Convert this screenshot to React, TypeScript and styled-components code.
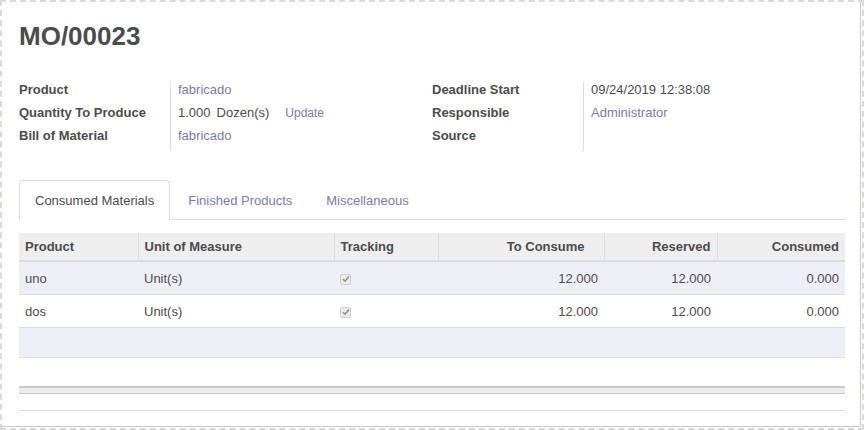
import React from "react";
import styled, { createGlobalStyle } from "styled-components";

const GlobalStyle = createGlobalStyle`
  html, body {
    margin: 0;
    padding: 0;
    background: #fff;
  }
  body {
    font-family: "Liberation Sans", Arial, sans-serif;
    font-size: 13px;
    color: #4c4c4c;
  }
`;

type Move = {
  product: string;
  uom: string;
  toConsume: string;
  reserved: string;
  consumed: string;
};

const moves: Move[] = [
  { product: "uno", uom: "Unit(s)", toConsume: "12.000", reserved: "12.000", consumed: "0.000" },
  { product: "dos", uom: "Unit(s)", toConsume: "12.000", reserved: "12.000", consumed: "0.000" },
];

const Check = () => (
  <CheckBox>
    <svg width="8" height="8" viewBox="0 0 8 8">
      <path d="M1 4.2 L3 6.2 L7 1.6" fill="none" stroke="#8d8d8d" strokeWidth="1.6" />
    </svg>
  </CheckBox>
);

const App = () => {
  return (
    <>
      <GlobalStyle />
      <Frame>
        <Sheet>
          <Title>MO/00023</Title>
          <Groups>
            <Group>
              <Divider />
              <Label $row={1}>Product</Label>
              <Value $row={1}>
                <Link>fabricado</Link>
              </Value>
              <Label $row={2}>Quantity To Produce</Label>
              <Value $row={2}>
                <Qty>1.000</Qty>
                <span>Dozen(s)</span>
                <SmallLink>Update</SmallLink>
              </Value>
              <Label $row={3}>Bill of Material</Label>
              <Value $row={3}>
                <Link>fabricado</Link>
              </Value>
            </Group>
            <Group>
              <Divider />
              <Label $row={1}>Deadline Start</Label>
              <Value $row={1}>09/24/2019 12:38:08</Value>
              <Label $row={2}>Responsible</Label>
              <Value $row={2}>
                <Link>Administrator</Link>
              </Value>
              <Label $row={3}>Source</Label>
              <Value $row={3} />
            </Group>
          </Groups>

          <Tabs>
            <Tab $active>Consumed Materials</Tab>
            <Tab>Finished Products</Tab>
            <Tab>Miscellaneous</Tab>
          </Tabs>

          <Table>
            <colgroup>
              <col style={{ width: 119 }} />
              <col style={{ width: 196 }} />
              <col style={{ width: 104 }} />
              <col style={{ width: 166 }} />
              <col style={{ width: 113 }} />
              <col style={{ width: 128 }} />
            </colgroup>
            <thead>
              <tr>
                <Th>Product</Th>
                <Th>Unit of Measure</Th>
                <Th>Tracking</Th>
                <Th $right $sorted>To Consume</Th>
                <Th $right>Reserved</Th>
                <Th $right>Consumed</Th>
              </tr>
            </thead>
            <tbody>
              {moves.map((m, i) => (
                <Row key={m.product} $odd={i % 2 === 0}>
                  <Td>{m.product}</Td>
                  <Td>{m.uom}</Td>
                  <Td>
                    <Check />
                  </Td>
                  <Td $right>{m.toConsume}</Td>
                  <Td $right>{m.reserved}</Td>
                  <Td $right>{m.consumed}</Td>
                </Row>
              ))}
              <EmptyRow $odd>
                <td colSpan={6} />
              </EmptyRow>
              <EmptyRow $last>
                <td colSpan={6} />
              </EmptyRow>
            </tbody>
            <tfoot>
              <FootRow>
                <td colSpan={6} />
              </FootRow>
            </tfoot>
          </Table>
          <BottomLine />
        </Sheet>
      </Frame>
    </>
  );
};

export default App;

const Frame = styled.div`
  box-sizing: border-box;
  width: 864px;
  height: 430px;
  border: 2px dashed #d8d8e4;
  overflow: hidden;
`;

const Sheet = styled.div`
  box-sizing: border-box;
  width: 859px;
  height: 425px;
  border-right: 1px solid #c9c9c9;
  border-bottom: 1px solid #c9c9c9;
  padding: 19px 14px 0 17px;
`;

const Title = styled.h1`
  margin: 0;
  font-size: 26px;
  line-height: 30px;
  font-weight: 700;
  color: #4c4c4c;
`;

const Groups = styled.div`
  display: grid;
  grid-template-columns: 413px 1fr;
  margin-top: 27px;
`;

const Group = styled.div`
  display: grid;
  grid-template-columns: 151px 1fr;
  grid-template-rows: repeat(3, 23px);
  align-items: center;
`;

const Label = styled.div<{ $row: number }>`
  grid-column: 1;
  grid-row: ${(p) => p.$row};
  font-weight: 700;
  color: #4c4c4c;
  white-space: nowrap;
`;

const Divider = styled.div`
  grid-column: 2;
  grid-row: 1 / span 3;
  align-self: stretch;
  border-left: 1px solid #dcdcdc;
  margin: 4px 0 -4px;
`;

const Value = styled.div<{ $row: number }>`
  grid-column: 2;
  grid-row: ${(p) => p.$row};
  padding-left: 8px;
  color: #4c4c4c;
  white-space: nowrap;
  display: flex;
  align-items: center;
`;

const Link = styled.span`
  color: #7c7bad;
`;

const Qty = styled.span`
  margin-right: 6px;
`;

const SmallLink = styled.span`
  color: #7c7bad;
  font-size: 12px;
  margin-left: 16px;
`;

const Tabs = styled.div`
  display: flex;
  align-items: flex-start;
  gap: 2px;
  margin-top: 33px;
  border-bottom: 1px solid #dcdcdc;
  height: 39px;
`;

const Tab = styled.div<{ $active?: boolean }>`
  box-sizing: border-box;
  height: 40px;
  padding: 0 15px;
  display: flex;
  align-items: center;
  color: ${(p) => (p.$active ? "#4c4c4c" : "#7c7bad")};
  background: ${(p) => (p.$active ? "#fff" : "transparent")};
  border: 1px solid ${(p) => (p.$active ? "#dcdcdc" : "transparent")};
  border-bottom-color: ${(p) => (p.$active ? "#fff" : "transparent")};
  border-radius: 4px 4px 0 0;
  white-space: nowrap;
  position: relative;
`;

const Table = styled.table`
  margin-top: 13px;
  width: 826px;
  table-layout: fixed;
  border-collapse: collapse;
`;

const Th = styled.th<{ $right?: boolean; $sorted?: boolean }>`
  height: 27px;
  padding: 0 ${(p) => (p.$sorted ? "19px" : "6px")} 0 6px;
  background: #eeeeee;
  font-weight: 700;
  color: #4c4c4c;
  text-align: ${(p) => (p.$right ? "right" : "left")};
  border-left: 1px solid #dcdcdc;
  border-bottom: 2px solid #dcdcdc;
  &:first-child {
    border-left: none;
  }
`;

const Row = styled.tr<{ $odd?: boolean }>`
  background: ${(p) => (p.$odd ? "#eeeef6" : "#fff")};
  border-bottom: 1px solid #dcdcdc;
`;

const Td = styled.td<{ $right?: boolean }>`
  height: 32px;
  padding: 0 6px;
  color: #4c4c4c;
  text-align: ${(p) => (p.$right ? "right" : "left")};
  vertical-align: middle;
`;

const EmptyRow = styled.tr<{ $odd?: boolean; $last?: boolean }>`
  background: ${(p) => (p.$odd ? "#eeeef6" : "#fff")};
  border-bottom: ${(p) => (p.$last ? "none" : "1px solid #dcdcdc")};
  td {
    height: ${(p) => (p.$last ? "28px" : "29px")};
    padding: 0;
  }
`;

const FootRow = styled.tr`
  background: #ececec;
  border-top: 2px solid #c8c8c8;
  border-bottom: 1px solid #c8c8c8;
  td {
    height: 5px;
    padding: 0;
  }
`;

const BottomLine = styled.div`
  width: 826px;
  margin-top: 16px;
  border-top: 1px solid #dcdcdc;
`;

const CheckBox = styled.span`
  box-sizing: border-box;
  display: inline-flex;
  align-items: center;
  justify-content: center;
  width: 11px;
  height: 11px;
  border: 1px solid #cfcfcf;
  border-radius: 2px;
  background: #ececec;
  vertical-align: middle;
`;
